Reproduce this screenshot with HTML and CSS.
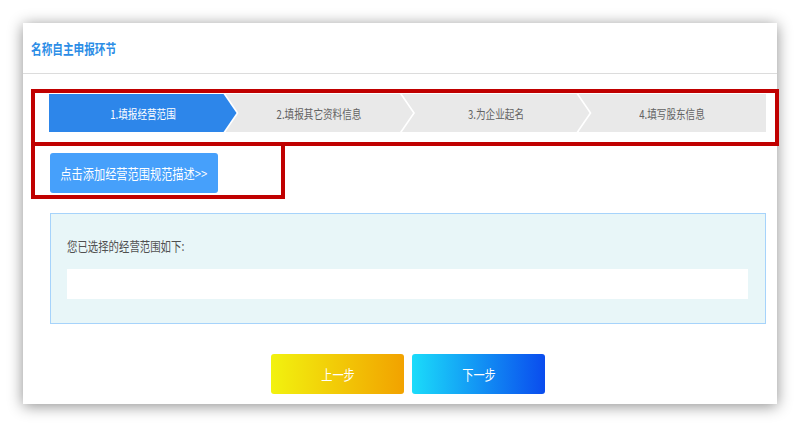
FILE: index.html
```html
<!DOCTYPE html>
<html lang="zh-CN">
<head>
    <meta charset="UTF-8">
    <meta name="viewport" content="width=device-width, initial-scale=1.0">
    <title>名称自主申报环节</title>
    <link rel="stylesheet" href="styles.css">
</head>
<body>
    <div class="panel">
        <div class="panel-head">
            <span class="title sq">名称自主申报环节</span>
        </div>
        <div class="panel-body">
            <div class="mark mark-steps">
                <div class="steps">
                    <div class="step active"><span class="sq">1.填报经营范围</span></div>
                    <div class="step"><span class="sq">2.填报其它资料信息</span></div>
                    <div class="step"><span class="sq">3.为企业起名</span></div>
                    <div class="step"><span class="sq">4.填写股东信息</span></div>
                </div>
            </div>
            <div class="mark mark-add">
                <button class="add-btn"><span class="sq">点击添加经营范围规范描述&gt;&gt;</span></button>
            </div>
            <div class="scope-box">
                <div class="scope-label"><span class="sq">您已选择的经营范围如下:</span></div>
                <div class="scope-field"></div>
            </div>
            <div class="actions">
                <button class="btn btn-prev"><span class="sq">上一步</span></button>
                <button class="btn btn-next"><span class="sq">下一步</span></button>
            </div>
        </div>
    </div>
</body>
</html>
```

FILE: styles.css
```css
body {
    margin: 0;
    padding: 23px;
    background: #fff;
    font-family: "Noto Sans CJK SC", "Noto Sans", sans-serif;
}
.sq {
    display: inline-block;
    transform: scaleX(0.8);
    white-space: nowrap;
}
.panel {
    width: 754px;
    background: #fff;
    box-shadow: 0 2px 14px rgba(0, 0, 0, 0.45);
}
.panel-head {
    height: 50px;
    border-bottom: 1px solid #dcdcdc;
    display: flex;
    align-items: center;
    padding-left: 8px;
}
.title {
    color: #2b8de6;
    font-size: 14px;
    font-weight: bold;
    transform: scaleX(0.76);
    transform-origin: left center;
}
.panel-body {
    padding: 15px 0 10px 8px;
}
.mark {
    border: 4px solid #c00000;
}
.mark-steps {
    padding: 1px 9px 10px 14px;
    margin-right: -2px;
}
.steps {
    display: flex;
    height: 38px;
}
.step {
    flex: 1;
    margin-left: -11px;
    background: #e9e9e9;
    color: #626262;
    font-size: 12px;
    display: flex;
    align-items: center;
    justify-content: center;
    clip-path: polygon(0 0, calc(100% - 13px) 0, 100% 50%, calc(100% - 13px) 100%, 0 100%, 13px 50%);
}
.step:first-child {
    margin-left: 0;
    clip-path: polygon(0 0, calc(100% - 13px) 0, 100% 50%, calc(100% - 13px) 100%, 0 100%);
}
.step:last-child {
    clip-path: polygon(0 0, 100% 0, 100% 100%, 0 100%, 13px 50%);
}
.step.active {
    background: #2d86ea;
    color: #fff;
}
.mark-add {
    width: 231px;
    margin-top: -4px;
    padding: 7px 0 2px 15px;
}
.add-btn {
    display: flex;
    align-items: center;
    justify-content: center;
    width: 168px;
    height: 40px;
    border: none;
    border-radius: 3px;
    background: #46a0fb;
    color: #fff;
    font-family: inherit;
    font-size: 14px;
    padding: 0;
}
.scope-box {
    margin: 14px 11px 0 19px;
    border: 1px solid #a6d3fb;
    background: #e8f6f8;
    padding: 22px 17px 24px 16px;
}
.scope-label {
    line-height: 20px;
    font-size: 13px;
    color: #505050;
}
.scope-label .sq {
    transform-origin: left center;
}
.scope-field {
    margin-top: 13px;
    height: 30px;
    background: #fff;
}
.actions {
    display: flex;
    justify-content: center;
    gap: 8px;
    margin: 30px 11px 0 19px;
}
.btn {
    display: flex;
    align-items: center;
    justify-content: center;
    width: 133px;
    height: 40px;
    border: none;
    border-radius: 3px;
    color: #fff;
    font-family: inherit;
    font-size: 14px;
    padding: 0;
}
.btn-prev {
    background: linear-gradient(to right, #f2f20f, #f2a200);
}
.btn-next {
    background: linear-gradient(to right, #1bdcfa, #0a4cee);
}
```
